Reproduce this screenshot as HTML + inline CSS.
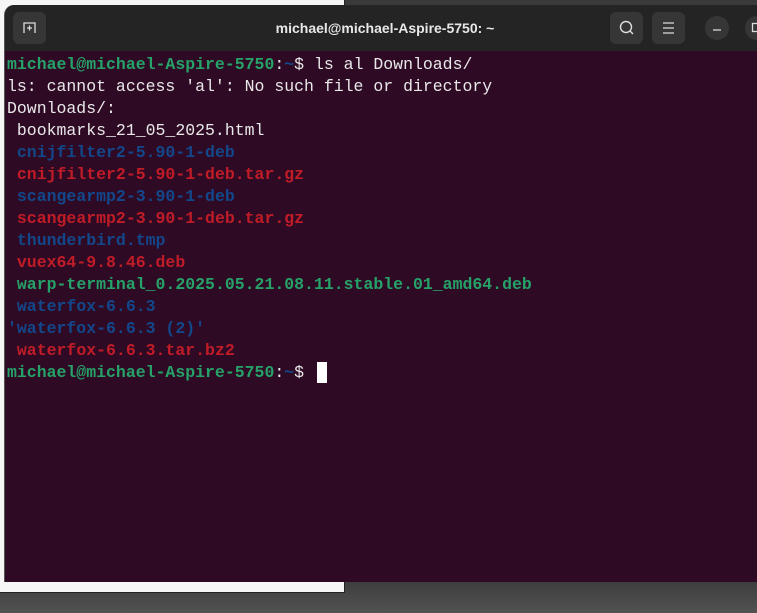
<!DOCTYPE html>
<html><head><style>
html,body{margin:0;padding:0}
body{width:757px;height:613px;position:relative;overflow:hidden;background:#3a3a3a;font-family:"Liberation Sans",sans-serif}
#bottom{position:absolute;left:0;top:582px;width:757px;height:31px;background:linear-gradient(#3e3e3e,#525252)}
#bgwin{position:absolute;left:0;top:0;width:344px;height:592px;background:#f6f6f6;border-right:1px solid #222;border-bottom:1px solid #222}
#term{position:absolute;left:4px;top:5px;width:760px;height:577px;background:#2f0a24;border-radius:10px 10px 0 0;overflow:hidden;border-left:1px solid #555}
#hdr{position:absolute;left:0;top:0;right:0;height:46px;background:#242424}
.btn{position:absolute;top:7px;width:33px;height:32px;background:#363636;border-radius:6px}
.circ{position:absolute;top:11px;width:24px;height:24px;background:#363636;border-radius:50%}
#title{position:absolute;top:15px;left:0;width:760px;text-align:center;color:#e8e8e8;font-weight:bold;font-size:14px}
pre{position:absolute;left:2px;top:49px;margin:0;font-family:"Liberation Mono",monospace;font-size:16.5px;line-height:22px;color:#e8e8e8}
.g{color:#26a269;font-weight:bold}.b{color:#12488b;font-weight:bold}.r{color:#c01c28;font-weight:bold}.gn{color:#26a269;font-weight:bold}
.t{color:#12488b;font-weight:bold}
#cur{position:absolute;left:312px;top:357px;width:10px;height:21px;background:#fff}
</style></head><body>
<div id="bottom"></div>
<div id="bgwin"></div>
<div id="term">
<div id="hdr">
<div class="btn" style="left:8px"><svg width="33" height="32"><path d="M11 21V11h11v10M16.5 13.5v5M14 16h5" stroke="#ddd" stroke-width="1.3" fill="none"/></svg></div>
<div id="title">michael@michael-Aspire-5750: ~</div>
<div class="btn" style="left:605px"><svg width="33" height="32"><circle cx="16" cy="15" r="5.5" stroke="#ddd" stroke-width="1.4" fill="none"/><path d="M20 19l3 3" stroke="#ddd" stroke-width="1.4"/></svg></div>
<div class="btn" style="left:647px"><svg width="33" height="32"><path d="M11 11h11M11 16h11M11 21h11" stroke="#ddd" stroke-width="1.3"/></svg></div>
<div class="circ" style="left:700px"><svg width="24" height="24"><path d="M8 14h8" stroke="#ddd" stroke-width="1.3"/></svg></div>
<div class="circ" style="left:740px"><svg width="24" height="24"><rect x="7.5" y="7.5" width="8" height="8" stroke="#ddd" stroke-width="1.3" fill="none"/></svg></div>
</div>
<pre><span class="g">michael@michael-Aspire-5750</span>:<span class="t">~</span>$ ls al Downloads/
ls: cannot access 'al': No such file or directory
Downloads/:
 bookmarks_21_05_2025.html
 <span class="b">cnijfilter2-5.90-1-deb</span>
 <span class="r">cnijfilter2-5.90-1-deb.tar.gz</span>
 <span class="b">scangearmp2-3.90-1-deb</span>
 <span class="r">scangearmp2-3.90-1-deb.tar.gz</span>
 <span class="b">thunderbird.tmp</span>
 <span class="r">vuex64-9.8.46.deb</span>
 <span class="gn">warp-terminal_0.2025.05.21.08.11.stable.01_amd64.deb</span>
 <span class="b">waterfox-6.6.3</span>
<span class="b">'waterfox-6.6.3 (2)'</span>
 <span class="r">waterfox-6.6.3.tar.bz2</span>
<span class="g">michael@michael-Aspire-5750</span>:<span class="t">~</span>$ </pre>
<div id="cur"></div>
</div>
</body></html>
